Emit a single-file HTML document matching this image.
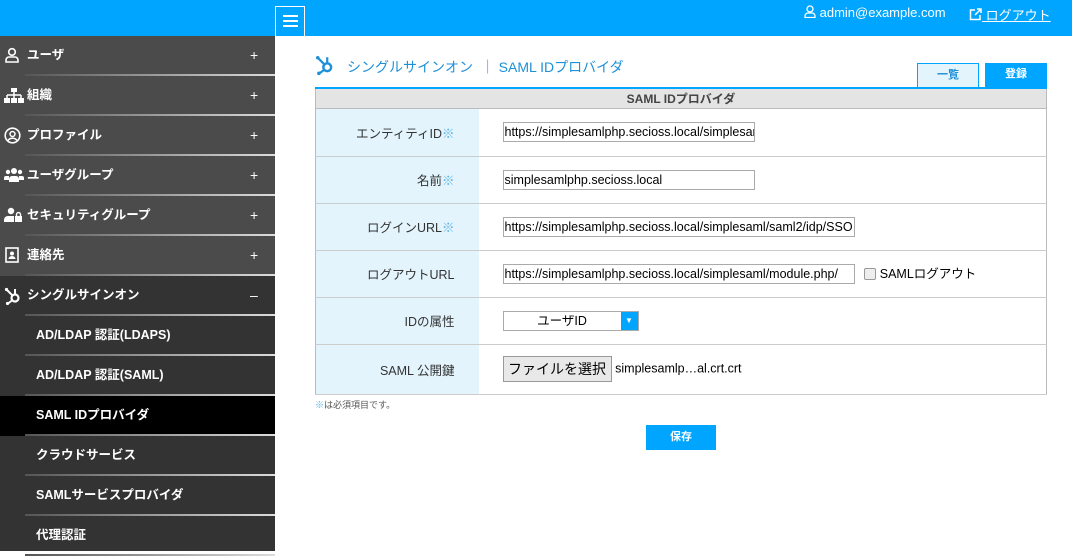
<!DOCTYPE html>
<html><head><meta charset="utf-8"><style>
*{box-sizing:border-box;margin:0;padding:0}
body{width:1072px;height:551px;overflow:hidden;font-family:"Liberation Sans","Noto Sans CJK JP",sans-serif;background:#fff;position:relative;font-size:13px}
.top{position:absolute;left:0;top:0;width:1072px;height:36px;background:#00a5ff}
.burger{position:absolute;left:275px;top:6px;width:30px;height:30px;border:1px solid #fff;border-bottom:none}
.burger i{position:absolute;left:7px;width:15px;height:2px;background:#fff}
.tr{position:absolute;top:5px;color:#fff;font-size:13px}
.side{position:absolute;left:0;top:36px;width:275px;height:515px;background:#333}
.it{position:relative;height:40px;color:#fff;font-weight:bold;font-size:12.5px;line-height:38px;padding-left:27px}
.it:after{content:"";position:absolute;left:25px;right:0;bottom:0;height:2px;background:linear-gradient(90deg,#555,#ddd)}
.it.t{background:#4b4b4b}
.it .p{position:absolute;left:250px;top:0;font-weight:normal;font-size:14px}
.it svg{position:absolute;left:4px;top:11px}
.it.s{padding-left:36px}
.it.a{background:#000}
.ttl{position:absolute;left:347px;top:57px;color:#1e90d8;font-size:14px}
.btn{position:absolute;top:63px;height:24px;font-size:11px;font-weight:bold;text-align:center;line-height:22px}
table{position:absolute;left:315px;top:87px;width:732px;border-collapse:collapse;border-top:2px solid #00a5ff}
td,th{border:1px solid #ccc;border-left:none;border-right:none}
th{background:#e4e4e4;height:20px;font-size:12px;color:#444;border:1px solid #bbb}
td.l{background:#e3f4fc;width:163px;text-align:right;padding-right:24px;font-size:12.5px;color:#333;border-left:1px solid #bbb}
td.r{border-right:1px solid #bbb;padding-left:24px}
tr{height:47px}
.in{display:inline-block;height:20px;border:1px solid #aaa;font-size:12.5px;line-height:18px;padding-left:1px;overflow:hidden;white-space:nowrap;vertical-align:middle}
.req{color:#5ab4e8}
</style></head><body>
<div class="top"></div>
<div class="burger"><i style="top:8px"></i><i style="top:13px"></i><i style="top:18px"></i></div>
<div class="tr" style="left:804px"><svg width="12" height="13" viewBox="0 0 12 13" style="vertical-align:-1px"><circle cx="6" cy="4" r="3" fill="none" stroke="#fff" stroke-width="1.3"/><path d="M1 12.5v-1.5a3 3 0 0 1 3-3h4a3 3 0 0 1 3 3v1.5z" fill="none" stroke="#fff" stroke-width="1.3"/></svg> admin@example.com</div>
<div class="tr" style="left:969px;text-decoration:underline"><svg width="13" height="13" viewBox="0 0 13 13" style="vertical-align:-1px"><path d="M6 2H1.5v9.5H11V7" fill="none" stroke="#fff" stroke-width="1.5"/><path d="M6 7l6-6M8 1h4v4" fill="none" stroke="#fff" stroke-width="1.5"/></svg> ログアウト</div>
<div class="side">
<div class="it t"><svg width="16" height="16" viewBox="0 0 16 16"><circle cx="8" cy="5" r="3.3" fill="none" stroke="#fff" stroke-width="1.6"/><path d="M2 15v-2a3 3 0 0 1 3-3h6a3 3 0 0 1 3 3v2z" fill="none" stroke="#fff" stroke-width="1.6"/></svg>ユーザ<span class="p">+</span></div>
<div class="it t"><svg width="20" height="16" viewBox="0 0 20 16"><rect x="7" y="1" width="6" height="4" fill="#fff"/><path d="M10 5v3M3 8h14M3 8v3M17 8v3M10 8v3" stroke="#fff" stroke-width="1.5"/><rect x="0" y="11" width="6" height="5" fill="#fff"/><rect x="7" y="11" width="6" height="5" fill="#fff"/><rect x="14" y="11" width="6" height="5" fill="#fff"/></svg>組織<span class="p">+</span></div>
<div class="it t"><svg width="17" height="17" viewBox="0 0 17 17"><circle cx="8.5" cy="8.5" r="7.3" fill="none" stroke="#fff" stroke-width="1.6"/><circle cx="8.5" cy="7" r="2.5" fill="none" stroke="#fff" stroke-width="1.5"/><path d="M4 13.5a5 4 0 0 1 9 0" fill="none" stroke="#fff" stroke-width="1.5"/></svg>プロファイル<span class="p">+</span></div>
<div class="it t"><svg width="20" height="16" viewBox="0 0 20 16"><circle cx="10" cy="4" r="3" fill="#fff"/><circle cx="4" cy="5" r="2.2" fill="#fff"/><circle cx="16" cy="5" r="2.2" fill="#fff"/><path d="M5 15v-3a3 3 0 0 1 3-3h4a3 3 0 0 1 3 3v3zM0 13v-2a2 2 0 0 1 2-2h3v4zM20 13v-2a2 2 0 0 0-2-2h-3v4z" fill="#fff"/></svg>ユーザグループ<span class="p">+</span></div>
<div class="it t"><svg width="20" height="16" viewBox="0 0 20 16"><circle cx="7" cy="4" r="3.2" fill="#fff"/><path d="M0 15v-2a4 4 0 0 1 4-4h6v6z" fill="#fff"/><rect x="11" y="9" width="7" height="6" fill="#fff"/><path d="M12.5 9V7.5a2 2 0 0 1 4 0V9" fill="none" stroke="#fff" stroke-width="1.4"/></svg>セキュリティグループ<span class="p">+</span></div>
<div class="it t"><svg width="16" height="16" viewBox="0 0 16 16"><rect x="2" y="1" width="12" height="14" fill="none" stroke="#fff" stroke-width="1.6"/><circle cx="8" cy="6.5" r="2" fill="#fff"/><path d="M4.5 12a3.5 3 0 0 1 7 0z" fill="#fff"/></svg>連絡先<span class="p">+</span></div>
<div class="it"><svg width="18" height="18" viewBox="0 0 18 18"><circle cx="11" cy="11" r="3.5" fill="none" stroke="#fff" stroke-width="2.2"/><path d="M8.5 8.5L3 3M11 7.5V2M8 13.5l-4 3" stroke="#fff" stroke-width="2"/><circle cx="2.5" cy="2.5" r="1.6" fill="#fff"/><circle cx="3.5" cy="16.5" r="1.6" fill="#fff"/></svg>シングルサインオン<span class="p">–</span></div>
<div class="it s">AD/LDAP 認証(LDAPS)</div>
<div class="it s">AD/LDAP 認証(SAML)</div>
<div class="it s a">SAML IDプロバイダ</div>
<div class="it s">クラウドサービス</div>
<div class="it s">SAMLサービスプロバイダ</div>
<div class="it s">代理認証</div>
</div>
<svg style="position:absolute;left:315px;top:54px" width="20" height="22" viewBox="0 0 18 18"><circle cx="11" cy="11" r="3.5" fill="none" stroke="#1e90d8" stroke-width="2.2"/><path d="M8.5 8.5L3 3M11 7.5V2M8 13.5l-4 3" stroke="#1e90d8" stroke-width="2"/><circle cx="2.5" cy="2.5" r="1.6" fill="#1e90d8"/><circle cx="3.5" cy="16.5" r="1.6" fill="#1e90d8"/></svg>
<div class="ttl">シングルサインオン &nbsp;｜ SAML IDプロバイダ</div>
<div class="btn" style="left:917px;width:62px;background:#e3f4fc;border:1px solid #00a5ff;border-bottom:none;color:#1e90d8">一覧</div>
<div class="btn" style="left:985px;width:62px;background:#00a5ff;color:#fff">登録</div>
<table>
<tr style="height:20px"><th colspan="2">SAML IDプロバイダ</th></tr>
<tr style="height:48px"><td class="l">エンティティID<span class="req">※</span></td><td class="r"><span class="in" style="width:252px">https://simplesamlphp.secioss.local/simplesaml</span></td></tr>
<tr><td class="l">名前<span class="req">※</span></td><td class="r"><span class="in" style="width:252px">simplesamlphp.secioss.local</span></td></tr>
<tr><td class="l">ログインURL<span class="req">※</span></td><td class="r"><span class="in" style="width:352px">https://simplesamlphp.secioss.local/simplesaml/saml2/idp/SSO</span></td></tr>
<tr><td class="l">ログアウトURL</td><td class="r"><span class="in" style="width:352px">https://simplesamlphp.secioss.local/simplesaml/module.php/</span> <span style="display:inline-block;width:12px;height:12px;border:1px solid #999;border-radius:2px;background:#eee;vertical-align:middle;margin-left:6px"></span> <span style="font-size:12.5px">SAMLログアウト</span></td></tr>
<tr><td class="l">IDの属性</td><td class="r"><span class="in" style="width:136px;position:relative;text-align:center;padding-right:18px">ユーザID<span style="position:absolute;right:0;top:0;width:17px;height:18px;background:#00a5ff;color:#fff;font-size:8px;line-height:18px">▼</span></span></td></tr>
<tr style="height:50px"><td class="l">SAML 公開鍵</td><td class="r"><span style="display:inline-block;height:26px;width:109px;border:1px solid #999;background:#e8e8e8;font-size:14px;text-align:center;line-height:24px;vertical-align:middle">ファイルを選択</span> <span style="font-size:12.5px">simplesamlp…al.crt.crt</span></td></tr>
</table>
<div style="position:absolute;left:315px;top:398px;font-size:9px;color:#555"><span class="req">※</span>は必須項目です。</div>
<div style="position:absolute;left:646px;top:425px;width:70px;height:25px;background:#00a5ff;color:#fff;font-size:11px;font-weight:bold;text-align:center;line-height:25px">保存</div>
</body></html>
